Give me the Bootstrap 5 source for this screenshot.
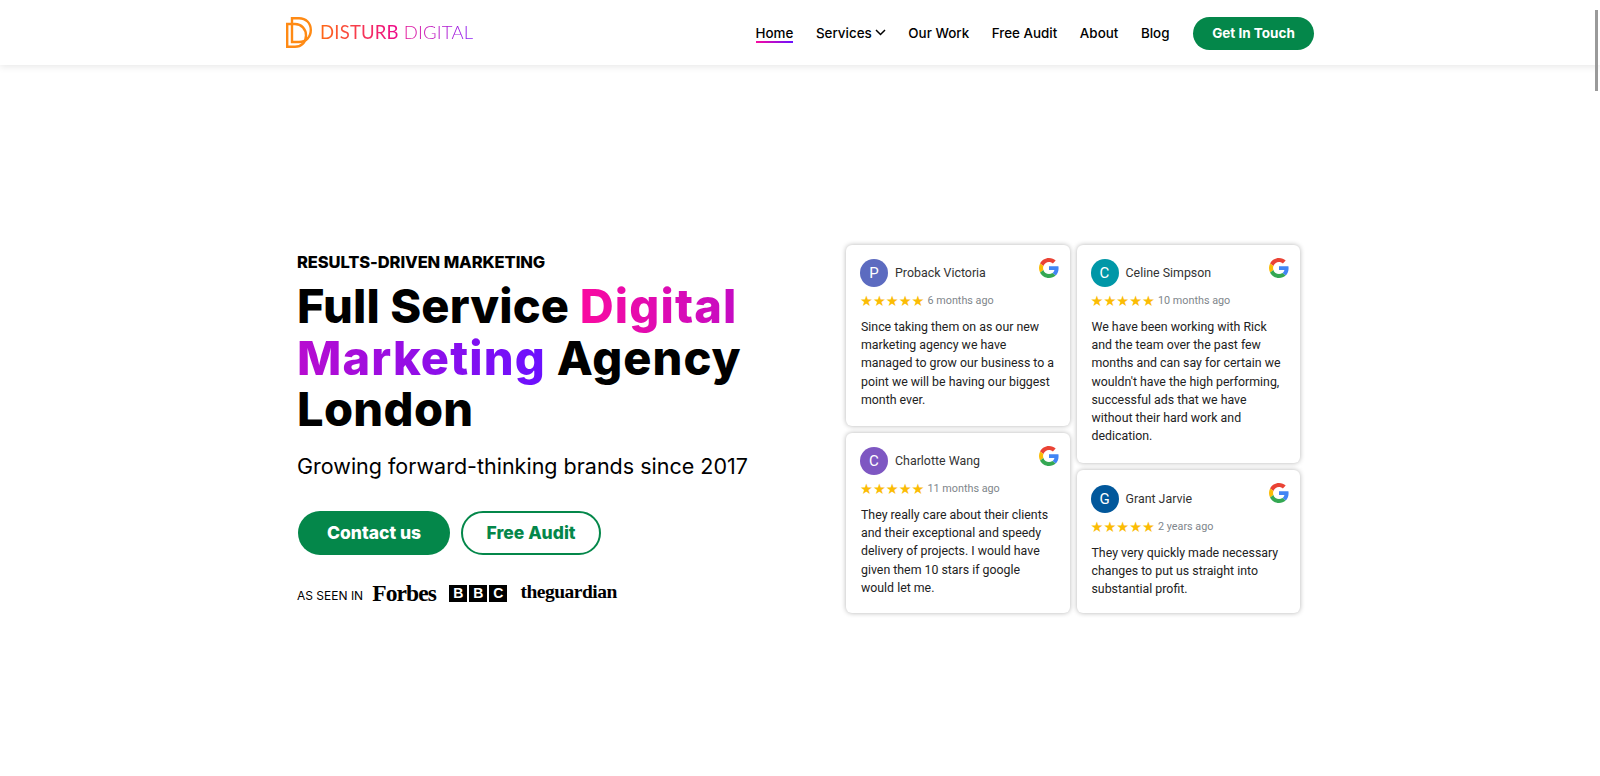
<!DOCTYPE html>
<html lang="en">
<head>
  <meta charset="UTF-8" />
  <meta name="viewport" content="width=device-width, initial-scale=1.0"/>
  <title>Disturb Digital</title>
  <link rel="stylesheet" href="https://cdn.jsdelivr.net/npm/bootstrap@5.3.0/dist/css/bootstrap.min.css">
  <style>
    body { font-family: 'Inter', sans-serif; background-color: #fff; color: #000; height: 776px; overflow: hidden; }
    .site-wrap { width: 1028px; margin: 0 auto; }
    .top-bar { height: 65px; background: #fff; box-shadow: 0 2px 7px rgba(0,0,0,.09); padding: 0; }
    .logo-text { font-family: 'Lato', sans-serif; font-size: 18.5px; line-height: 1; letter-spacing: .2px; background: linear-gradient(90deg, #ff6a14 0%, #ee0a8a 50%, #8a1cf5 100%); -webkit-background-clip: text; background-clip: text; color: transparent; }
    .logo-light { font-weight: 300; }
    .top-bar .navbar-nav { gap: 22.6px; margin-right: 23.5px; }
    .top-bar .navbar-nav .nav-link { padding: 0; color: #000; font-size: 13.4px; font-weight: 500; line-height: 20px; }
    .top-bar .navbar-nav .nav-link.is-current { position: relative; }
    .top-bar .navbar-nav .nav-link.is-current::after { content: ""; position: absolute; left: 0; right: 0; bottom: 0; height: 2px; background: linear-gradient(90deg, #f90ba0, #6b10ff); }
    .nav-chevron { margin-left: 3px; }
    .btn-green { background: #04874a; color: #fff; border: 0; font-weight: 700; }
    .btn-green:hover { background: #04703e; color: #fff; }
    .btn-line { background: #fff; color: #04874a; border: 2px solid #04874a; font-weight: 700; }
    .btn-nav { width: 121px; height: 33px; margin-top: 2px; padding: 0; font-size: 13.5px; line-height: 33px; }
    .hero-wrap { padding: 180px 14px 0 11px; }
    .hero-left { padding-top: 5px; width: 470px; }
    .eyebrow { font-size: 16.5px; font-weight: 800; line-height: 24px; margin: 0; letter-spacing: -.1px; }
    .hero-title { font-size: 47px; font-weight: 800; line-height: 51.7px; margin: 6px 0 0; letter-spacing: .35px; }
    .title-tight { letter-spacing: .1px; }
    .title-wide { letter-spacing: 1px; }
    .grad-a, .grad-b { letter-spacing: 1.15px; -webkit-background-clip: text; background-clip: text; color: transparent; }
    .grad-a { background-image: linear-gradient(90deg, #fa0aa0, #c40cc4); }
    .grad-b { background-image: linear-gradient(90deg, #b80cd0, #6a10ff); }
    .hero-sub { font-size: 21.5px; line-height: 30px; margin: 16px 0 0; font-weight: 400; }
    .btn-row { margin: 30px 0 0 1px; gap: 11px; }
    .btn-big { height: 44px; padding: 0; font-size: 17.5px; line-height: 40px; font-weight: 800; }
    .btn-contact { width: 152px; line-height: 44px; }
    .btn-audit { width: 140px; }
    .seen-row { margin-top: 24px; height: 30px; }
    .seen-label { font-size: 12px; margin: 3px 9px 0 0; }
    .seen-forbes { font-family: 'Liberation Serif', serif; font-weight: 700; font-size: 23.5px; letter-spacing: -.9px; margin-right: 13px; }
    .seen-bbc { gap: 1.5px; margin: 0 13px 2px 0; }
    .seen-bbc span { width: 18.5px; height: 17px; background: #000; color: #fff; font-family: 'Liberation Sans', sans-serif; font-weight: 700; font-size: 14px; line-height: 17px; text-align: center; }
    .seen-guardian { font-family: 'Liberation Serif', serif; font-weight: 700; font-size: 19.5px; letter-spacing: -.5px; line-height: 24px; margin-bottom: 5px; }
    .review-cols { gap: 7px; width: 454px; }
    .review-col { width: 224px; gap: 7px; }
    .review-card { border: 0; border-radius: 6px; box-shadow: 0 0 5px rgba(0,0,0,.3); padding: 14px 14px 0; font-family: 'Roboto', sans-serif; }
    .review-pic { width: 28px; height: 28px; border-radius: 50%; color: #fff; font-size: 15px; line-height: 28px; text-align: center; }
    .pic-indigo { background: #5c6bc0; }
    .pic-teal { background: #0097a7; }
    .pic-purple { background: #7e57c2; }
    .pic-navy { background: #01579b; }
    .review-name { font-size: 12.4px; color: #333; margin-left: 7px; }
    .review-g { width: 20px; height: 20px; position: absolute; top: 13px; right: 11px; }
    .review-stars { font-family: 'DejaVu Sans', sans-serif; font-size: 14.4px; line-height: 18px; color: #fbbc04; margin-top: 5px; }
    .review-date { font-family: 'Roboto', sans-serif; font-size: 10.8px; color: #80868b; margin-left: 3px; }
    .review-text { font-size: 12.35px; line-height: 18.2px; color: #222; margin: 8px 0 0 1px; }
    .h-a { height: 181px; } .h-b { height: 180px; } .h-c { height: 218px; } .h-d { height: 143px; padding-top: 15px; }
    .fake-scroll { position: fixed; top: 10px; right: 2px; width: 3px; height: 81px; background: #9a9a9a; }
  </style>
</head>
<body>

<nav class="navbar navbar-expand top-bar">
  <div class="site-wrap d-flex align-items-center justify-content-between">
    <a class="d-flex align-items-center text-decoration-none" href="#">
      <svg width="26" height="31" viewBox="0 0 26 31" fill="none" stroke="#ff8a14" stroke-width="2.4">
        <path d="M6 1.2H13C20 1.2 24.8 6 24.8 13C24.8 20 20 25 13 25H6Z"/>
        <path d="M1.2 7H9C15.5 7 20 12 20 18.5C20 25 15.5 29.8 9 29.8H1.2Z"/>
      </svg>
      <span class="logo-text ms-2">DISTURB <span class="logo-light">DIGITAL</span></span>
    </a>
    <div class="d-flex align-items-center">
      <ul class="navbar-nav">
        <li class="nav-item"><a class="nav-link is-current" href="#">Home</a></li>
        <li class="nav-item">
          <a class="nav-link d-flex align-items-center" href="#">Services
            <svg class="nav-chevron" width="11" height="7" viewBox="0 0 11 7" fill="none" stroke="#000" stroke-width="1.5"><path d="M1 1l4.5 4.5L10 1"/></svg>
          </a>
        </li>
        <li class="nav-item"><a class="nav-link" href="#">Our Work</a></li>
        <li class="nav-item"><a class="nav-link" href="#">Free Audit</a></li>
        <li class="nav-item"><a class="nav-link" href="#">About</a></li>
        <li class="nav-item"><a class="nav-link" href="#">Blog</a></li>
      </ul>
      <a class="btn btn-green btn-nav rounded-pill" href="#">Get In Touch</a>
    </div>
  </div>
</nav>

<svg width="0" height="0" class="position-absolute">
  <symbol id="g-mark" viewBox="0 0 48 48">
    <path fill="#EA4335" d="M24 9.5c3.54 0 6.71 1.22 9.21 3.6l6.85-6.85C35.9 2.38 30.47 0 24 0 14.62 0 6.51 5.38 2.56 13.22l7.98 6.19C12.43 13.72 17.74 9.5 24 9.5z"/>
    <path fill="#4285F4" d="M46.98 24.55c0-1.57-.15-3.09-.38-4.55H24v9.02h12.94c-.58 2.96-2.26 5.48-4.78 7.18l7.73 6c4.51-4.18 7.09-10.36 7.09-17.65z"/>
    <path fill="#FBBC05" d="M10.53 28.59c-.48-1.45-.76-2.99-.76-4.59s.27-3.14.76-4.59l-7.98-6.19C.92 16.46 0 20.12 0 24c0 3.88.92 7.54 2.56 10.78l7.97-6.19z"/>
    <path fill="#34A853" d="M24 48c6.48 0 11.93-2.13 15.89-5.81l-7.73-6c-2.15 1.45-4.92 2.3-8.16 2.3-6.26 0-11.57-4.22-13.47-9.91l-7.98 6.19C6.51 42.62 14.62 48 24 48z"/>
  </symbol>
</svg>

<main class="site-wrap hero-wrap d-flex justify-content-between align-items-start">
  <section class="hero-left">
    <p class="eyebrow">RESULTS-DRIVEN MARKETING</p>
    <h1 class="hero-title"><span class="title-tight">Full Service</span> <span class="grad-a">Digital</span> <span class="grad-b">Marketing</span> <span class="title-wide">Agency</span> London</h1>
    <p class="hero-sub">Growing forward-thinking brands since 2017</p>
    <div class="d-flex btn-row">
      <a class="btn btn-green btn-big btn-contact rounded-pill" href="#">Contact us</a>
      <a class="btn btn-line btn-big btn-audit rounded-pill" href="#">Free Audit</a>
    </div>
    <div class="d-flex align-items-center seen-row">
      <span class="seen-label">AS SEEN IN</span>
      <span class="seen-forbes">Forbes</span>
      <span class="d-flex seen-bbc"><span>B</span><span>B</span><span>C</span></span>
      <span class="seen-guardian">theguardian</span>
    </div>
  </section>

  <section class="d-flex review-cols">
    <div class="d-flex flex-column review-col">
      <article class="card review-card h-a">
        <svg class="review-g"><use href="#g-mark"/></svg>
        <div class="d-flex align-items-center"><span class="review-pic pic-indigo">P</span><span class="review-name">Proback Victoria</span></div>
        <div class="d-flex align-items-center review-stars">★★★★★<span class="review-date">6 months ago</span></div>
        <p class="review-text">Since taking them on as our new marketing agency we have managed to grow our business to a point we will be having our biggest month ever.</p>
      </article>
      <article class="card review-card h-b">
        <svg class="review-g"><use href="#g-mark"/></svg>
        <div class="d-flex align-items-center"><span class="review-pic pic-purple">C</span><span class="review-name">Charlotte Wang</span></div>
        <div class="d-flex align-items-center review-stars">★★★★★<span class="review-date">11 months ago</span></div>
        <p class="review-text">They really care about their clients and their exceptional and speedy delivery of projects. I would have given them 10 stars if google would let me.</p>
      </article>
    </div>
    <div class="d-flex flex-column review-col">
      <article class="card review-card h-c">
        <svg class="review-g"><use href="#g-mark"/></svg>
        <div class="d-flex align-items-center"><span class="review-pic pic-teal">C</span><span class="review-name">Celine Simpson</span></div>
        <div class="d-flex align-items-center review-stars">★★★★★<span class="review-date">10 months ago</span></div>
        <p class="review-text">We have been working with Rick and the team over the past few months and can say for certain we wouldn't have the high performing, successful ads that we have without their hard work and dedication.</p>
      </article>
      <article class="card review-card h-d">
        <svg class="review-g"><use href="#g-mark"/></svg>
        <div class="d-flex align-items-center"><span class="review-pic pic-navy">G</span><span class="review-name">Grant Jarvie</span></div>
        <div class="d-flex align-items-center review-stars">★★★★★<span class="review-date">2 years ago</span></div>
        <p class="review-text">They very quickly made necessary changes to put us straight into substantial profit.</p>
      </article>
    </div>
  </section>
</main>

<div class="fake-scroll"></div>

<script src="https://cdn.jsdelivr.net/npm/bootstrap@5.3.0/dist/js/bootstrap.bundle.min.js"></script>
</body>
</html>
